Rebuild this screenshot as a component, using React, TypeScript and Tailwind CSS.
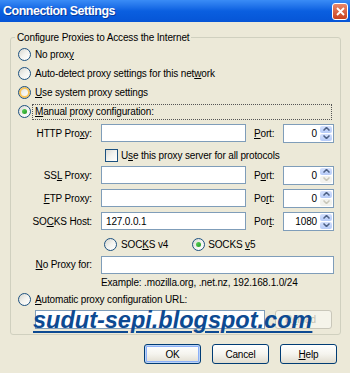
import type { ReactNode } from 'react';

function U({ children }: { children: ReactNode }) {
  return <span className="underline underline-offset-[1px]">{children}</span>;
}

function Radio({ checked = false, hover = false }: { checked?: boolean; hover?: boolean }) {
  return (
    <span
      className={
        'flex h-[13px] w-[13px] shrink-0 items-center justify-center rounded-full border border-[#1c5180] bg-linear-to-br from-[#d6d6cf] via-[#f3f3ef] to-white ' +
        (hover ? 'shadow-[inset_0_0_0_2px_#f8c45a]' : '')
      }
    >
      {checked && <span className="h-[5px] w-[5px] rounded-full bg-linear-to-br from-[#5fd35f] to-[#1a9a1a]" />}
    </span>
  );
}

function Checkbox() {
  return (
    <span className="h-[13px] w-[13px] shrink-0 border border-[#1c5180] bg-linear-to-br from-[#dcdcd7] via-[#f3f3ef] to-white" />
  );
}

function Field({ value = '', className = '' }: { value?: string; className?: string }) {
  return (
    <div className={'flex h-[18px] items-center border border-[#7f9db9] bg-white px-[4px] ' + className}>
      {value}
    </div>
  );
}

function Arrow({ up, off }: { up: boolean; off: boolean }) {
  return (
    <div
      className={
        'flex flex-1 items-center justify-center rounded-[2px] ' +
        (off ? 'bg-[#f2f2ee]' : 'bg-linear-to-b from-[#d5e1fd] to-[#b6cbf8]')
      }
    >
      <svg width="7" height="4" viewBox="0 0 7 4">
        <path
          d={up ? 'M0.5 3.5 L3.5 0.5 L6.5 3.5' : 'M0.5 0.5 L3.5 3.5 L6.5 0.5'}
          fill="none"
          stroke={off ? '#c9c7ba' : '#4d6185'}
          strokeWidth="1.5"
        />
      </svg>
    </div>
  );
}

function PortField({ value, downOff = false }: { value: string; downOff?: boolean }) {
  return (
    <div className="flex h-[19px] w-[51px] border border-[#7f9db9] bg-white">
      <div className="flex flex-1 items-center justify-end pr-[3px]">{value}</div>
      <div className="flex w-[13px] flex-col gap-[1px] py-[1px] pr-[1px]">
        <Arrow up off={false} />
        <Arrow up={false} off={downOff} />
      </div>
    </div>
  );
}

function ProxyRow({
  label,
  value,
  port,
  portLabel,
  downOff,
}: {
  label: ReactNode;
  value?: string;
  port: string;
  portLabel: ReactNode;
  downOff?: boolean;
}) {
  return (
    <div className="flex h-[18px] items-center">
      <span className="w-[81px] text-right">{label}</span>
      <Field className="ml-[9px] w-[145px]" value={value} />
      <span className="ml-[8px] w-[29px]">{portLabel}</span>
      <PortField value={port} downOff={downOff} />
    </div>
  );
}

function XpButton({ children, isDefault = false }: { children: ReactNode; isDefault?: boolean }) {
  return (
    <div
      className={
        'flex h-[20px] w-[57px] items-center justify-center rounded-[3px] border border-[#003c74] bg-linear-to-b from-white via-[#f5f4ee] to-[#e0dccf] ' +
        (isDefault ? 'shadow-[inset_0_0_0_1px_#bcd4f6,inset_0_0_0_2px_#8cb0f8]' : '')
      }
    >
      {children}
    </div>
  );
}

export default function App() {
  return (
    <div className="relative h-[373px] w-[350px] overflow-hidden bg-[#ece9d8] font-['Liberation_Sans',Arial,sans-serif] text-[10px] leading-[13px] tracking-[-0.15px] text-black">
      {/* title bar */}
      <div className="flex h-[22px] items-center justify-between bg-linear-to-b from-[#3a8cf6] via-[#0a5fe0] to-[#0655d6] pl-[3px] pr-[2px]">
        <span className="text-[12.5px] font-bold tracking-[-0.5px] text-white [text-shadow:1px_1px_0_#0a3a9a]">
          Connection Settings
        </span>
        <div className="flex h-[17px] w-[16px] items-center justify-center rounded-[3px] border border-white bg-linear-to-b from-[#e8866a] to-[#c8401c]">
          <svg width="9" height="9" viewBox="0 0 9 9">
            <path d="M1 1 L8 8 M8 1 L1 8" stroke="white" strokeWidth="1.8" />
          </svg>
        </div>
      </div>

      <fieldset className="mt-[9px] ml-[10px] mr-[9px] rounded-[3px] border border-[#d0d0bf] pb-[5px]">
        <legend className="ml-[4px] px-[2px]">Configure Proxies to Access the Internet</legend>

        <div className="mt-[1px] flex h-[19px] items-center gap-[4px] pl-[7px]">
          <Radio />
          <span>
            No prox<U>y</U>
          </span>
        </div>
        <div className="flex h-[19px] items-center gap-[4px] pl-[7px]">
          <Radio />
          <span>
            Auto-detect proxy settings for this net<U>w</U>ork
          </span>
        </div>
        <div className="flex h-[19px] items-center gap-[4px] pl-[7px]">
          <Radio hover />
          <span>
            <U>U</U>se system proxy settings
          </span>
        </div>
        <div className="flex h-[19px] items-center gap-[1px] pl-[7px]">
          <Radio checked />
          <span className="mr-[8px] flex h-[16px] flex-1 items-center border border-dotted border-[#555] pl-[2px]">
            <span>
              <U>M</U>anual proxy configuration:
            </span>
          </span>
        </div>

        <div className="mt-[3px]">
          <ProxyRow
            label={
              <>
                HTTP Pro<U>x</U>y:
              </>
            }
            portLabel={
              <>
                <U>P</U>ort:
              </>
            }
            port="0"
          />
        </div>
        <div className="mt-[4px] flex h-[18px] items-center gap-[3px] pl-[94px]">
          <Checkbox />
          <span>
            U<U>s</U>e this proxy server for all protocols
          </span>
        </div>
        <div className="mt-[2px]">
          <ProxyRow
            label={
              <>
                SS<U>L</U> Proxy:
              </>
            }
            portLabel={
              <>
                P<U>o</U>rt:
              </>
            }
            port="0"
            downOff
          />
        </div>
        <div className="mt-[5px]">
          <ProxyRow
            label={
              <>
                <U>F</U>TP Proxy:
              </>
            }
            portLabel={
              <>
                Po<U>r</U>t:
              </>
            }
            port="0"
            downOff
          />
        </div>
        <div className="mt-[5px]">
          <ProxyRow
            label={
              <>
                SO<U>C</U>KS Host:
              </>
            }
            value="127.0.0.1"
            portLabel={
              <>
                Por<U>t</U>:
              </>
            }
            port="1080"
          />
        </div>
        <div className="mt-[5px] flex h-[18px] items-center pl-[93px]">
          <Radio />
          <span className="ml-[4px]">
            SOC<U>K</U>S v4
          </span>
          <span className="ml-[24px]">
            <Radio checked />
          </span>
          <span className="ml-[3px]">
            SOCKS <U>v</U>5
          </span>
        </div>
        <div className="mt-[3px] flex h-[17px] items-center">
          <span className="w-[81px] text-right">
            <U>N</U>o Proxy for:
          </span>
          <Field className="ml-[9px] h-[17px] w-[233px]" />
        </div>
        <div className="mt-[1px] flex h-[16px] items-center pl-[90px]">
          Example: .mozilla.org, .net.nz, 192.168.1.0/24
        </div>
        <div className="flex h-[18px] items-center gap-[4px] pl-[7px]">
          <Radio />
          <span>
            <U>A</U>utomatic proxy configuration URL:
          </span>
        </div>
        <div className="mt-[2px] flex h-[19px] items-center pl-[24px]">
          <Field className="h-[19px] w-[230px]" />
          <div className="ml-[10px] flex h-[19px] w-[57px] items-center justify-center rounded-[3px] border border-[#c9c7ba] bg-[#f5f4ea] pr-[6px] text-[#c4c0b2]">
            R<span className="underline">e</span>load
          </div>
        </div>
      </fieldset>

      <div className="mt-[9px] flex justify-end gap-[11px] pr-[13px]">
        <XpButton isDefault>OK</XpButton>
        <XpButton>Cancel</XpButton>
        <XpButton>
          <span>
            <U>H</U>elp
          </span>
        </XpButton>
      </div>

      {/* blog watermark over the dialog */}
      <div className="absolute left-[33px] top-[308px] text-[23.5px] leading-[24px] font-bold italic tracking-normal text-[#0d4a92] underline decoration-2 underline-offset-[3px]">
        sudut-sepi.blogspot.com
      </div>
    </div>
  );
}
